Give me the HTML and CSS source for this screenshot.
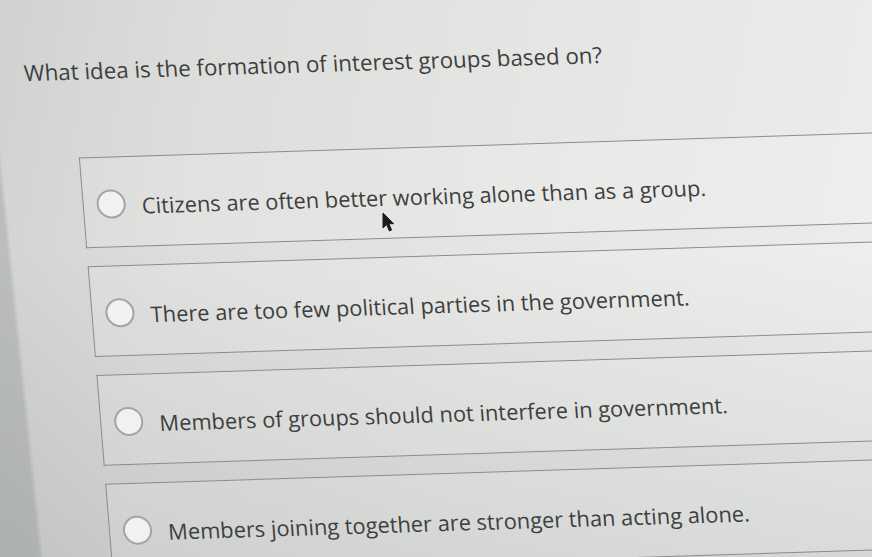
FILE: index.html
```
<!DOCTYPE html>
<html>
<head>
    <meta name="viewport" content="width=device-width, initial-scale=1.0">
    <link rel="stylesheet" href="styles.css">
</head>
<body>
    <div class="sheet">
        <div class="question">What idea is the formation of interest groups based on?</div>
        <ul class="choices">
            <li class="choice"><span class="radio"></span><span class="label">Citizens are often better working alone than as a group.</span></li>
            <li class="choice"><span class="radio"></span><span class="label">There are too few political parties in the government.</span></li>
            <li class="choice"><span class="radio"></span><span class="label">Members of groups should not interfere in government.</span></li>
            <li class="choice"><span class="radio"></span><span class="label">Members joining together are stronger than acting alone.</span></li>
        </ul>
    </div>

    <!-- mouse pointer hovering over the first answer -->
    <svg class="pointer" width="13" height="21" viewBox="0 0 13 21">
        <path d="M1 1 L1 16 L4.6 12.6 L7.4 19 L9.6 18 L6.9 11.7 L11.6 11.7 Z" fill="#1c1c1c" stroke="#1c1c1c" stroke-width="1" stroke-linejoin="round"/>
    </svg>
</body>
</html>
```

FILE: styles.css
```
html, body {
    margin: 0;
    height: 100%;
}

body {
    position: relative;
    overflow: hidden;
    font-family: "Open Sans", "Liberation Sans", sans-serif;
    color: #3e3f3f;
    background:
        linear-gradient(84deg, rgba(70, 76, 78, 0.17) 0, rgba(70, 76, 78, 0.17) 4.2%, rgba(70, 76, 78, 0) 4.7%),
        linear-gradient(to top, rgba(80, 86, 88, 0.15), rgba(80, 86, 88, 0) 55%),
        linear-gradient(100deg, #d0d2d1 0%, #dddedc 22%, #e5e6e4 55%, #eceeeb 100%);
}

/* the screen is seen at a slight angle */
.sheet {
    transform-origin: 0 0;
    transform: skewY(-1.8deg) skewX(4.6deg);
    padding-top: 60px;
}

.question {
    font-size: 22.3px;
    line-height: 28px;
    padding-left: 18px;
}

.choices {
    list-style: none;
    margin: 72px 0 0 66px;
    padding: 0;
    display: flex;
    flex-direction: column;
    gap: 18px;
}

.choice {
    width: 900px;
    height: 91px;
    box-sizing: border-box;
    display: flex;
    align-items: center;
    gap: 16px;
    padding-left: 13px;
    padding-top: 8px;
    border: 1.5px solid #8a8c8c;
    border-right: none;
    background: rgba(255, 255, 255, 0.12);
}

.radio {
    width: 25px;
    height: 25px;
    flex-shrink: 0;
    border: 2px solid #a3a5a5;
    border-radius: 50%;
    background: #f1f2f0;
    margin-top: -4px;
}

.label {
    font-size: 21.8px;
    line-height: 28px;
}

.pointer {
    position: absolute;
    left: 382px;
    top: 212px;
    filter: blur(0.6px);
}
```
